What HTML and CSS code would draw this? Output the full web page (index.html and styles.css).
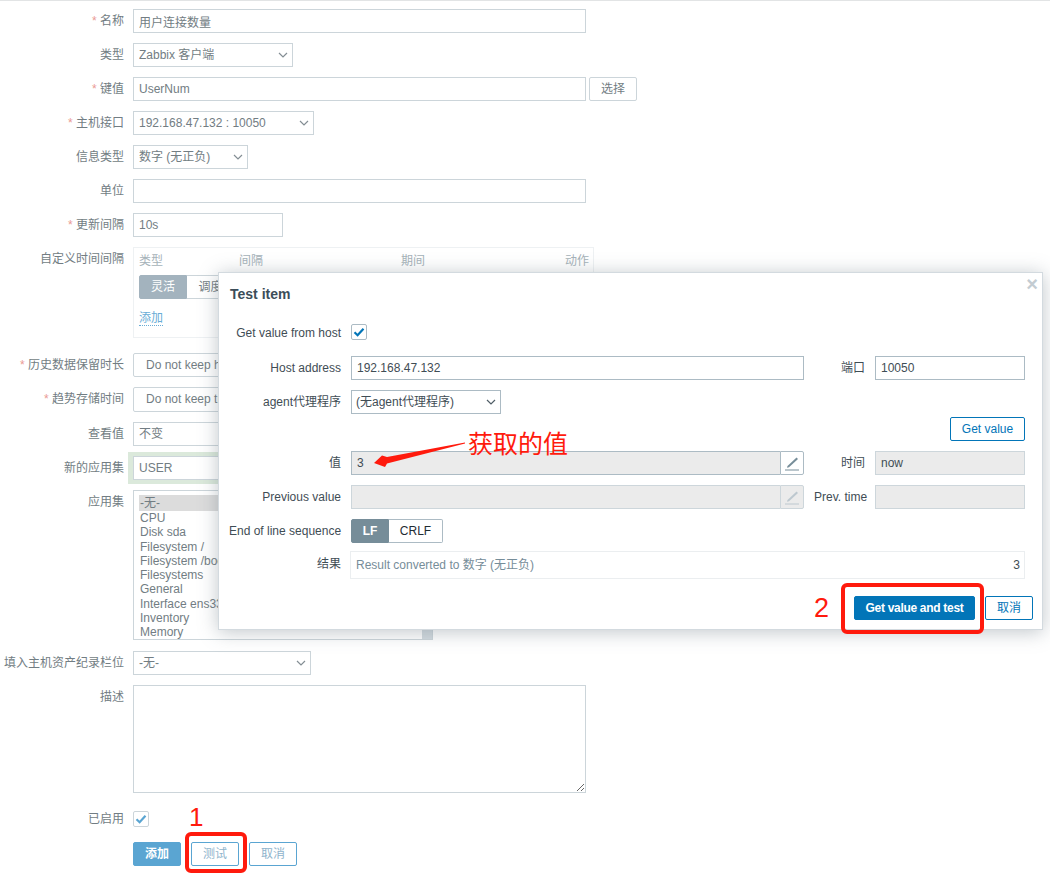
FILE: index.html
```html
<!DOCTYPE html>
<html lang="zh">
<head>
<meta charset="utf-8">
<title>Test item</title>
<link rel="stylesheet" href="styles.css">
</head>
<body>
<main class="form">
  <label class="lbl"><span class="req">*</span> 名称</label>
  <div><input class="inp w-full" value="用户连接数量"></div>
  <label class="lbl">类型</label>
  <div><select class="sel w-type"><option>Zabbix 客户端</option></select></div>
  <label class="lbl"><span class="req">*</span> 键值</label>
  <div class="inline"><input class="inp w-full" value="UserNum"><button class="btn-alt pick">选择</button></div>
  <label class="lbl"><span class="req">*</span> 主机接口</label>
  <div><select class="sel w-iface"><option>192.168.47.132 : 10050</option></select></div>
  <label class="lbl">信息类型</label>
  <div><select class="sel w-info"><option>数字 (无正负)</option></select></div>
  <label class="lbl">单位</label>
  <div><input class="inp w-full"></div>
  <label class="lbl"><span class="req">*</span> 更新间隔</label>
  <div><input class="inp w-update" value="10s"></div>
  <label class="lbl">自定义时间间隔</label>
  <div class="intervals">
    <div class="int-head"><span class="c1">类型</span><span class="c2">间隔</span><span class="c3">期间</span><span class="c4">动作</span></div>
    <div class="seg"><span class="seg-on">灵活</span><span class="seg-off">调度</span></div>
    <a class="add-link">添加</a>
  </div>
  <label class="lbl"><span class="req">*</span> 历史数据保留时长</label>
  <div><div class="keep">Do not keep history</div></div>
  <label class="lbl"><span class="req">*</span> 趋势存储时间</label>
  <div><div class="keep keep-tall">Do not keep trends</div></div>
  <label class="lbl">查看值</label>
  <div><select class="sel w-view"><option>不变</option></select></div>
  <label class="lbl">新的应用集</label>
  <div class="newapp"><input class="inp w-full" value="USER"></div>
  <label class="lbl">应用集</label>
  <div class="list">
    <div class="opt opt-sel">-无-</div>
    <div class="opt">CPU</div>
    <div class="opt">Disk sda</div>
    <div class="opt">Filesystem /</div>
    <div class="opt">Filesystem /boot</div>
    <div class="opt">Filesystems</div>
    <div class="opt">General</div>
    <div class="opt">Interface ens33</div>
    <div class="opt">Inventory</div>
    <div class="opt">Memory</div>
    <div class="thumb"></div>
  </div>
  <label class="lbl">填入主机资产纪录栏位</label>
  <div><select class="sel w-inv"><option>-无-</option></select></div>
  <label class="lbl">描述</label>
  <div><textarea class="desc"></textarea></div>
  <label class="lbl lbl-check">已启用</label>
  <div class="check-row"><span class="check faded"><svg width="14" height="14" viewBox="0 0 14 14"><path d="M2.5 7.2 5.6 10.2 11.5 3.8" fill="none" stroke="#5aa5d2" stroke-width="2.2"/></svg></span></div>
  <div></div>
  <div class="actions">
    <button class="btn-solid">添加</button>
    <button class="btn-out">测试</button>
    <button class="btn-out">取消</button>
  </div>
</main>

<section class="modal">
  <button class="close" aria-label="close">×</button>
  <h2 class="title">Test item</h2>
  <div class="mgrid">
    <label class="mlbl mlbl-check">Get value from host</label>
    <div class="span3"><span class="check"><svg width="14" height="14" viewBox="0 0 14 14"><path d="M2.5 7.2 5.6 10.2 11.5 3.8" fill="none" stroke="#0275b8" stroke-width="2.2"/></svg></span></div>

    <label class="mlbl">Host address</label>
    <input class="minp" value="192.168.47.132">
    <label class="mlbl">端口</label>
    <input class="minp" value="10050">

    <label class="mlbl">agent代理程序</label>
    <div class="span3"><select class="msel"><option>(无agent代理程序)</option></select></div>

    <div class="getrow"><button class="mbtn-out getval">Get value</button></div>

    <label class="mlbl">值</label>
    <div class="withbtn">
      <input class="minp ro" value="3" readonly>
      <button class="edit" aria-label="edit"><svg width="16" height="16" viewBox="0 0 16 16"><path d="M3.5 11 12.5 2.5 14 4 5 12.2 3 12.8Z" fill="#768d99"/><path d="M1 15H15" stroke="#768d99" stroke-width="1"/></svg></button>
    </div>
    <label class="mlbl">时间</label>
    <input class="minp ro light" value="now" readonly>

    <label class="mlbl">Previous value</label>
    <div class="withbtn">
      <input class="minp ro light" readonly>
      <button class="edit off" aria-label="edit"><svg width="16" height="16" viewBox="0 0 16 16"><path d="M3.5 11 12.5 2.5 14 4 5 12.2 3 12.8Z" fill="#bdc8cf"/><path d="M1 15H15" stroke="#bdc8cf" stroke-width="1"/></svg></button>
    </div>
    <label class="mlbl">Prev. time</label>
    <input class="minp ro light" readonly>

    <label class="mlbl">End of line sequence</label>
    <div class="span3"><div class="mseg"><span class="mseg-on">LF</span><span class="mseg-off">CRLF</span></div></div>

    <label class="mlbl mlbl-result">结果</label>
    <div class="result"><span>Result converted to 数字 (无正负)</span><b class="result-val">3</b></div>
  </div>
  <div class="mfoot">
    <button class="mbtn-solid">Get value and test</button>
    <button class="mbtn-out cancel">取消</button>
  </div>
</section>

<svg class="note-arrow" width="100" height="30" viewBox="0 0 100 30"><path d="M94 2.5 16 17 11 15.5 3 23 14 27 16 23.5 94 3.5Z" fill="#ff1a0d"/></svg>
<div class="note note-text">获取的值</div>
<div class="note note-1">1</div>
<div class="note note-2">2</div>
<div class="ring ring-1"></div>
<div class="ring ring-2"></div>
</body>
</html>
```
FILE: styles.css
```css
* { box-sizing: border-box; }
html, body { margin: 0; padding: 0; }
body {
  position: relative;
  height: 881px;
  overflow: hidden;
  background: #fff;
  border-top: 1px solid #e2e4e5;
  font: 12px/14px "Liberation Sans", "Noto Sans CJK SC", sans-serif;
  color: #727d83;
}
input, select, button, textarea { font: inherit; color: inherit; outline: none; }

/* page form */
.form {
  display: grid;
  grid-template-columns: 124px 1fr;
  column-gap: 9px;
  row-gap: 10px;
  padding-top: 8px;
}
.lbl { text-align: right; line-height: 24px; white-space: nowrap; }
.req { color: #ea9a94; }
.inp, .sel {
  display: block;
  height: 24px;
  border: 1px solid #ccd5da;
  background-color: #fff;
  padding: 0 5px;
  border-radius: 0;
}
.sel {
  appearance: none;
  -webkit-appearance: none;
  background-image: url("data:image/svg+xml,%3Csvg xmlns='http://www.w3.org/2000/svg' width='10' height='6' viewBox='0 0 10 6'%3E%3Cpath d='M1 1 5 5 9 1' fill='none' stroke='%23848e94' stroke-width='1.2'/%3E%3C/svg%3E");
  background-repeat: no-repeat;
  background-position: right 4px center;
}
.w-full { width: 453px; }
.w-type { width: 160px; }
.w-iface { width: 181px; }
.w-info { width: 115px; }
.w-update { width: 150px; }
.w-view { width: 300px; }
.w-inv { width: 178px; }
.inline { display: flex; gap: 3px; }
.btn-alt {
  height: 24px;
  width: 48px;
  padding: 0;
  background: #fff;
  border: 1px solid #ccd5da;
  border-radius: 2px;
}

.intervals {
  width: 461px;
  height: 91px;
  margin-bottom: 5px;
  border: 1px solid #eef1f3;
  padding: 0 4px 0 5px;
}
.int-head { display: flex; height: 26px; line-height: 26px; color: #a6b2b9; }
.c1 { width: 100px; }
.c2 { width: 162px; }
.c3 { flex: 1; }
.seg { display: flex; margin-top: 1px; width: 96px; height: 24px; line-height: 22px; text-align: center; }
.seg-on { width: 48px; background: #a3b3be; color: #fff; border: 1px solid #a3b3be; border-radius: 2px 0 0 2px; }
.seg-off { width: 48px; border: 1px solid #ccd5da; border-left: 0; }
.add-link {
  display: inline-block;
  margin-top: 12px;
  color: #69acd6;
  border-bottom: 1px dotted #69acd6;
  line-height: 14px;
}
.keep {
  width: 200px;
  height: 24px;
  line-height: 22px;
  border: 1px solid #ccd5da;
  border-radius: 2px;
  padding-left: 12px;
}
.keep-tall { height: 25px; }
.newapp {
  margin: -4px 0;
  padding: 4px 5px;
  margin-left: -5px;
  background: #dbe9db;
  width: 470px;
}
.list {
  position: relative;
  width: 300px;
  height: 150px;
  margin-bottom: 1px;
  border: 1px solid #ccd5da;
  padding: 5px 5px;
  overflow: hidden;
}
.opt { height: 14.3px; line-height: 14.3px; padding-left: 1px; white-space: nowrap; }
.opt-sel { background: #dcdcdc; margin: -1px 0 0; height: 16px; line-height: 16px; }
.thumb { position: absolute; right: 0; bottom: 0; width: 10px; height: 20px; background: #d3dbe0; }
.desc {
  display: block;
  width: 453px;
  height: 108px;
  border: 1px solid #ccd5da;
  resize: both;
}
.check-row { height: 16px; margin-top: 8px; }
.lbl-check { margin-top: 8px; line-height: 16px; }
.check {
  display: flex;
  align-items: center;
  justify-content: center;
  width: 16px;
  height: 16px;
  border: 1px solid #acbbc4;
  border-radius: 2px;
  background: #fff;
}
.check.faded { border-color: #ccd5da; }
.actions { display: flex; gap: 10px; margin-top: 5px; }
.btn-solid, .btn-out {
  width: 48px;
  height: 24px;
  padding: 0;
  border-radius: 2px;
  border: 1px solid #5aa5d2;
}
.btn-solid { background: #5aa5d2; color: #fff; font-weight: bold; }
.btn-out { background: #fff; color: #8fb4cc; }

/* dialog */
.modal {
  position: absolute;
  left: 218px;
  top: 271px;
  width: 825px;
  height: 358px;
  background: #fff;
  border: 1px solid #d3dadf;
  box-shadow: 0 2px 18px rgba(90, 105, 115, .38);
  padding: 0 17px 0 10px;
  color: #3f4d55;
}
.close {
  position: absolute;
  right: 2px;
  top: 2px;
  width: 16px;
  height: 18px;
  padding: 0;
  border: 0;
  background: none;
  color: #c3ccd2;
  font-size: 20px;
  font-weight: bold;
  line-height: 18px;
}
.title {
  margin: 0;
  height: 51px;
  padding: 13px 0 0 1px;
  font-size: 14px;
  line-height: 16px;
  font-weight: bold;
  color: #3b4d59;
}
.mgrid {
  display: grid;
  grid-template-columns: 112px 453px 51px 150px;
  column-gap: 10px;
  grid-template-rows: 32px 34px 27px 34px 34px 34px 32px 28px;
}
.mlbl { text-align: right; line-height: 24px; white-space: nowrap; }
.mlbl-check { line-height: 18px; }
.mlbl-result { line-height: 26px; }
.span3 { grid-column: 2 / span 3; }
.minp {
  display: block;
  width: 100%;
  height: 24px;
  border: 1px solid #acbbc4;
  background: #fff;
  padding: 0 5px;
  border-radius: 0;
  color: #3f4d55;
}
.ro { background: #ebebeb; }
.ro.light { border-color: #cdd6db; }
.msel {
  display: block;
  appearance: none;
  -webkit-appearance: none;
  width: 150px;
  height: 24px;
  border: 1px solid #acbbc4;
  border-radius: 0;
  padding: 0 4px;
  background: #fff url("data:image/svg+xml,%3Csvg xmlns='http://www.w3.org/2000/svg' width='10' height='6' viewBox='0 0 10 6'%3E%3Cpath d='M1 1 5 5 9 1' fill='none' stroke='%23505e66' stroke-width='1.2'/%3E%3C/svg%3E") no-repeat right 4px center;
}
.getrow { grid-column: 1 / -1; display: flex; justify-content: flex-end; }
.mbtn-out {
  height: 24px;
  padding: 0;
  background: #fff;
  border: 1px solid #0275b8;
  border-radius: 2px;
  color: #0275b8;
}
.getval { width: 75px; }
.cancel { width: 48px; }
.withbtn { display: flex; }
.withbtn .minp { flex: 1; min-width: 0; border-right: 0; }
.edit {
  width: 24px;
  height: 24px;
  padding: 3px;
  display: flex;
  align-items: center;
  justify-content: center;
  background: #fff;
  border: 1px solid #acbbc4;
  border-radius: 0 2px 2px 0;
}
.edit.off { background: #ebebeb; border-color: #cdd6db; }
.mseg { display: flex; width: 92px; height: 24px; line-height: 22px; text-align: center; }
.mseg-on { width: 38px; background: #768d99; border: 1px solid #768d99; border-radius: 2px 0 0 2px; color: #fff; font-weight: bold; }
.mseg-off { width: 54px; border: 1px solid #acbbc4; border-left: 0; border-radius: 0 2px 2px 0; color: #1f2c33; }
.result {
  grid-column: 2 / span 3;
  margin-left: -1px;
  height: 28px;
  display: flex;
  align-items: center;
  justify-content: space-between;
  border: 1px solid #ebeef0;
  padding: 0 4px 0 5px;
  color: #768d99;
}
.result-val { font-weight: normal; color: #3f4d55; }
.mfoot {
  display: flex;
  justify-content: flex-end;
  gap: 10px;
  margin: 17px -8px 0 0;
}
.mbtn-solid {
  width: 121px;
  height: 24px;
  padding: 0;
  background: #0275b8;
  border: 1px solid #0275b8;
  border-radius: 2px;
  color: #fff;
  font-weight: bold;
  letter-spacing: -.3px;
}

/* annotations drawn over the screenshot */
.note { position: absolute; color: #ff1a0d; white-space: nowrap; }
.note-text { left: 468px; top: 426px; font-size: 25px; line-height: 34px; }
.note-1 { left: 189px; top: 801px; font-size: 26px; line-height: 30px; }
.note-2 { left: 814px; top: 592px; font-size: 27px; line-height: 30px; }
.note-arrow { position: absolute; left: 371px; top: 439px; }
.ring { position: absolute; border: 4px solid #ff1a0d; border-radius: 6px; }
.ring-1 { left: 185px; top: 831px; width: 62px; height: 41px; }
.ring-2 { left: 841px; top: 582px; width: 143px; height: 51px; }
```
